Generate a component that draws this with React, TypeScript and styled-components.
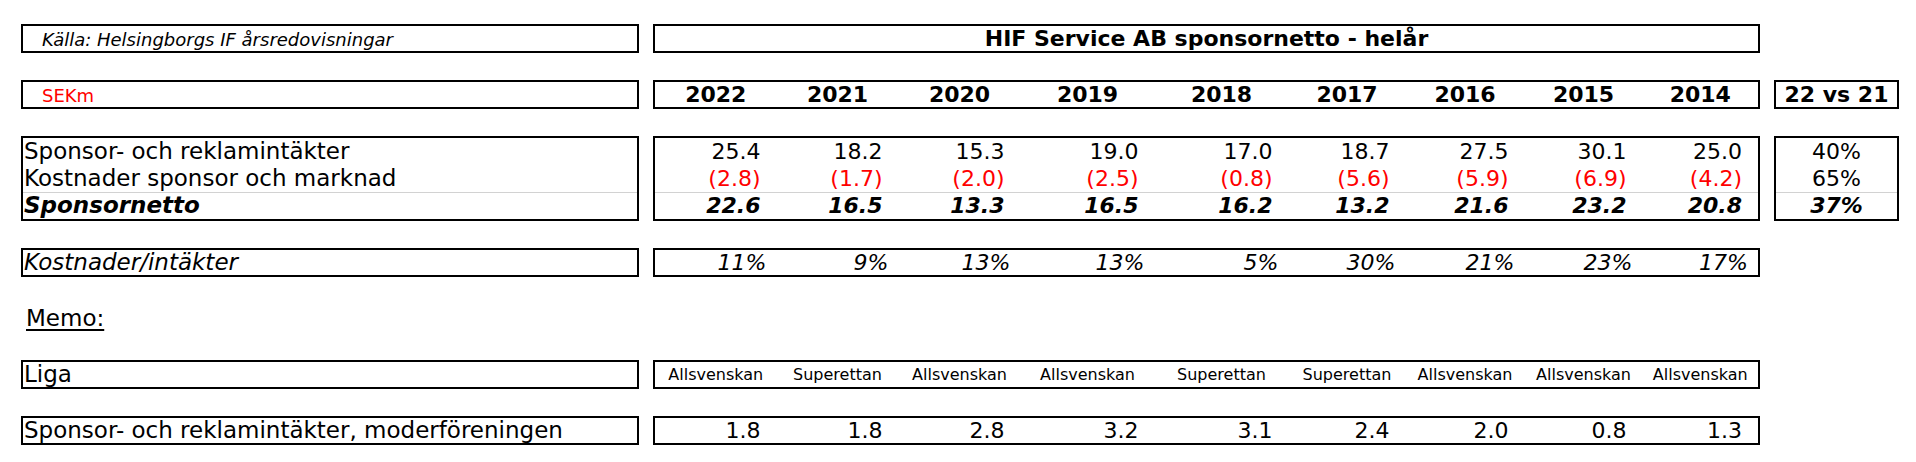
import React from 'react';
import styled, { createGlobalStyle, css } from 'styled-components';

const GlobalStyle = createGlobalStyle`
  html, body {
    margin: 0;
    padding: 0;
    background: #ffffff;
  }
  body {
    font-family: 'DejaVu Sans', Verdana, sans-serif;
    color: #000000;
  }
`;

// widths of the nine year columns inside the bordered box (sum 1103)
const yearCols = '121.5px 122px 122px 134px 134px 117px 119px 118px 115.5px';

const years = ['2022', '2021', '2020', '2019', '2018', '2017', '2016', '2015', '2014'];
const revenue = ['25.4', '18.2', '15.3', '19.0', '17.0', '18.7', '27.5', '30.1', '25.0'];
const costs = ['(2.8)', '(1.7)', '(2.0)', '(2.5)', '(0.8)', '(5.6)', '(5.9)', '(6.9)', '(4.2)'];
const net = ['22.6', '16.5', '13.3', '16.5', '16.2', '13.2', '21.6', '23.2', '20.8'];
const ratio = ['11%', '9%', '13%', '13%', '5%', '30%', '21%', '23%', '17%'];
const leagues = [
  'Allsvenskan',
  'Superettan',
  'Allsvenskan',
  'Allsvenskan',
  'Superettan',
  'Superettan',
  'Allsvenskan',
  'Allsvenskan',
  'Allsvenskan',
];
const parentClub = ['1.8', '1.8', '2.8', '3.2', '3.1', '2.4', '2.0', '0.8', '1.3'];

type Variant = 'plain' | 'red' | 'bold' | 'italic' | 'boldItalic';

const variantStyle = (v: Variant = 'plain') => {
  switch (v) {
    case 'red':
      return css`
        color: #ff0000;
      `;
    case 'bold':
      return css`
        font-weight: 700;
      `;
    case 'italic':
      return css`
        font-style: italic;
      `;
    case 'boldItalic':
      return css`
        font-weight: 700;
        font-style: italic;
      `;
    default:
      return css``;
  }
};

const App = () => {
  return (
    <>
      <GlobalStyle />
      <Sheet>
        <SheetRow>
          <Box>
            <Source>Källa: Helsingborgs IF årsredovisningar</Source>
          </Box>
          <Box>
            <Title>HIF Service AB sponsornetto - helår</Title>
          </Box>
        </SheetRow>

        <SheetRow>
          <Box>
            <Unit>SEKm</Unit>
          </Box>
          <Box>
            <YearGrid>
              {years.map((y) => (
                <HeadCell key={y}>{y}</HeadCell>
              ))}
            </YearGrid>
          </Box>
          <Box>
            <HeadCell>22 vs 21</HeadCell>
          </Box>
        </SheetRow>

        <SheetRow>
          <Box $tall>
            <Label $tall>Sponsor- och reklamintäkter</Label>
            <Label $tall>Kostnader sponsor och marknad</Label>
            <Label $tall $variant="boldItalic" $ruled>
              Sponsornetto
            </Label>
          </Box>
          <Box $tall>
            <YearGrid $tall>
              {revenue.map((v, i) => (
                <NumCell key={i}>{v}</NumCell>
              ))}
            </YearGrid>
            <YearGrid $tall>
              {costs.map((v, i) => (
                <NumCell key={i} $variant="red">
                  {v}
                </NumCell>
              ))}
            </YearGrid>
            <YearGrid $tall $ruled>
              {net.map((v, i) => (
                <NumCell key={i} $variant="boldItalic">
                  {v}
                </NumCell>
              ))}
            </YearGrid>
          </Box>
          <Box $tall>
            <ChangeCell>40%</ChangeCell>
            <ChangeCell>65%</ChangeCell>
            <ChangeCell $variant="boldItalic" $ruled>
              37%
            </ChangeCell>
          </Box>
        </SheetRow>

        <SheetRow>
          <Box>
            <Label $variant="italic">Kostnader/intäkter</Label>
          </Box>
          <Box>
            <YearGrid>
              {ratio.map((v, i) => (
                <NumCell key={i} $variant="italic" $pad={10}>
                  {v}
                </NumCell>
              ))}
            </YearGrid>
          </Box>
        </SheetRow>

        <Memo>Memo:</Memo>

        <SheetRow>
          <Box>
            <Label>Liga</Label>
          </Box>
          <Box>
            <YearGrid>
              {leagues.map((v, i) => (
                <LeagueCell key={i}>{v}</LeagueCell>
              ))}
            </YearGrid>
          </Box>
        </SheetRow>

        <SheetRow>
          <Box>
            <Label>Sponsor- och reklamintäkter, moderföreningen</Label>
          </Box>
          <Box>
            <YearGrid>
              {parentClub.map((v, i) => (
                <NumCell key={i}>{v}</NumCell>
              ))}
            </YearGrid>
          </Box>
        </SheetRow>
      </Sheet>
    </>
  );
};

export default App;

const Sheet = styled.div`
  display: flex;
  flex-direction: column;
  gap: 27px;
  padding: 24px 0 0 21px;
  width: 1916px;
  box-sizing: border-box;
`;

const SheetRow = styled.div`
  display: grid;
  grid-template-columns: 618px 1107px 125px;
  column-gap: 14px;
  align-items: start;
`;

const Box = styled.div<{ $tall?: boolean }>`
  box-sizing: border-box;
  border: 2px solid #000;
  height: ${(p) => (p.$tall ? '85px' : '29px')};
  display: flex;
  flex-direction: column;
  justify-content: ${(p) => (p.$tall ? 'flex-start' : 'center')};
  overflow: hidden;
`;

const ruledTop = css`
  border-top: 1.5px solid #d2d2d2;
`;

const Source = styled.div`
  font-size: 18px;
  font-style: italic;
  padding-left: 19px;
  line-height: 25px;
  padding-top: 2px;
`;

const Unit = styled.div`
  font-size: 18px;
  color: #ff0000;
  padding-left: 19px;
  line-height: 25px;
  padding-top: 2px;
`;

const Title = styled.div`
  font-size: 22px;
  font-weight: 700;
  text-align: center;
  line-height: 25px;
`;

const YearGrid = styled.div<{ $tall?: boolean; $ruled?: boolean }>`
  display: grid;
  grid-template-columns: ${yearCols};
  box-sizing: border-box;
  height: ${(p) => (p.$tall ? '27px' : '25px')};
  line-height: ${(p) => (p.$tall ? (p.$ruled ? '25px' : '27px') : '25px')};
  ${(p) => p.$ruled && ruledTop};
`;

const Label = styled.div<{ $variant?: Variant; $ruled?: boolean; $tall?: boolean }>`
  box-sizing: border-box;
  height: ${(p) => (p.$tall ? '27px' : '25px')};
  line-height: ${(p) => (p.$tall ? (p.$ruled ? '25px' : '27px') : '25px')};
  font-size: 23px;
  padding-left: 1px;
  white-space: nowrap;
  ${(p) => p.$ruled && ruledTop};
  ${(p) => variantStyle(p.$variant)};
`;

const HeadCell = styled.div`
  font-size: 22px;
  font-weight: 700;
  text-align: center;
  line-height: 25px;
`;

const NumCell = styled.div<{ $variant?: Variant; $pad?: number }>`
  font-size: 22px;
  text-align: right;
  padding-right: ${(p) => p.$pad ?? 16}px;
  white-space: nowrap;
  ${(p) => variantStyle(p.$variant)};
`;

const ChangeCell = styled.div<{ $variant?: Variant; $ruled?: boolean }>`
  box-sizing: border-box;
  height: 27px;
  line-height: ${(p) => (p.$ruled ? '25px' : '27px')};
  font-size: 22px;
  text-align: center;
  ${(p) => p.$ruled && ruledTop};
  ${(p) => variantStyle(p.$variant)};
`;

const LeagueCell = styled.div`
  font-size: 16px;
  text-align: center;
  white-space: nowrap;
`;

const Memo = styled.div`
  height: 29px;
  line-height: 29px;
  font-size: 23px;
  padding-left: 5px;
  text-decoration: underline;
  text-underline-offset: 3px;
`;
